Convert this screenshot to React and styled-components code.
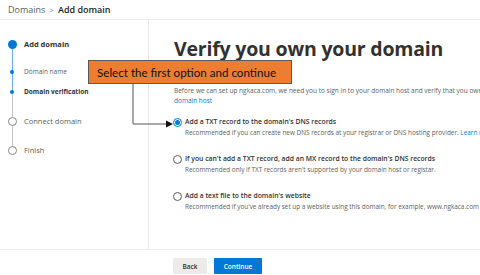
import React from "react";
import styled, { createGlobalStyle } from "styled-components";

const GlobalStyle = createGlobalStyle`
	html, body {
		margin: 0;
		padding: 0;
		background: #ffffff;
	}
	body {
		font-family: "Open Sans", "Noto Sans", sans-serif;
		color: #323130;
		overflow: hidden;
	}
`;

const Page = styled.div`
	position: relative;
	width: 480px;
	height: 275px;
	display: flex;
	flex-direction: column;
`;

const Header = styled.div`
	height: 20px;
	display: flex;
	align-items: center;
	gap: 3px;
	padding-left: 8px;
	border-bottom: 1px solid #edebe9;
	font-size: 9px;
	box-sizing: border-box;
`;

const Crumb = styled.span`
	color: ${(p) => (p.current ? "#201f1e" : "#605e5c")};
	font-weight: ${(p) => (p.current ? 600 : 400)};
`;

const Chevron = styled.span`
	color: #8a8886;
	font-size: 8px;
	margin: 0 1px;
`;

const Body = styled.div`
	flex: 1;
	display: flex;
	border-bottom: 1px solid #edebe9;
`;

const Nav = styled.div`
	width: 149px;
	border-right: 1px solid #edebe9;
	padding-top: 18px;
	box-sizing: border-box;
`;

const Step = styled.div`
	position: relative;
	display: flex;
	align-items: flex-start;
	height: ${(p) => p.span}px;

	&::after {
		content: "";
		display: ${(p) => (p.last ? "none" : "block")};
		position: absolute;
		left: 11.5px;
		top: 6px;
		width: 1.2px;
		height: ${(p) => p.span}px;
		background: ${(p) => p.line};
	}
`;

const Marker = styled.div`
	width: 24px;
	height: 12px;
	display: flex;
	align-items: center;
	justify-content: center;
	position: relative;
	z-index: 1;
`;

const Dot = styled.div`
	width: ${(p) => p.size}px;
	height: ${(p) => p.size}px;
	border-radius: 50%;
	box-sizing: border-box;
	background: ${(p) => (p.hollow ? "#ffffff" : "#0078d4")};
	border: ${(p) => (p.hollow ? "1px solid #8a8886" : "none")};
`;

const StepLabel = styled.div`
	line-height: 12px;
	font-size: ${(p) => p.size}px;
	font-weight: ${(p) => (p.bold ? 700 : 400)};
	color: ${(p) => (p.bold ? "#323130" : "#605e5c")};
	white-space: nowrap;
`;

const Main = styled.div`
	flex: 1;
	padding-left: 25px;
	padding-top: 15px;
	overflow: hidden;
	white-space: nowrap;
`;

const Title = styled.h1`
	margin: 0;
	font-size: 19.5px;
	font-weight: 700;
	line-height: 28px;
	color: #323130;
	letter-spacing: -0.2px;
`;

const Intro = styled.p`
	margin: 23px 0 0;
	font-size: 6.5px;
	line-height: 10px;
	color: #605e5c;
`;

const Link = styled.span`
	color: #0078d4;
`;

const Options = styled.div`
	display: flex;
	flex-direction: column;
	gap: 16px;
	margin-top: 11px;
`;

const Option = styled.div`
	display: grid;
	grid-template-columns: 12px 1fr;
	row-gap: 1px;
	margin-left: -1px;
`;

const Radio = styled.div`
	width: 9px;
	height: 9px;
	border-radius: 50%;
	border: 1px solid ${(p) => (p.checked ? "#0078d4" : "#605e5c")};
	box-sizing: border-box;
	display: flex;
	align-items: center;
	justify-content: center;
	align-self: center;

	&::after {
		content: "";
		display: ${(p) => (p.checked ? "block" : "none")};
		width: 5px;
		height: 5px;
		border-radius: 50%;
		background: #0078d4;
	}
`;

const OptionLabel = styled.div`
	font-size: 6.8px;
	font-weight: 600;
	line-height: 10px;
	color: #323130;
`;

const OptionHint = styled.div`
	grid-column: 2;
	font-size: 6.4px;
	line-height: 10px;
	color: #605e5c;
`;

const Footer = styled.div`
	height: 25px;
	display: flex;
	align-items: flex-start;
	gap: 7px;
	padding: 8px 0 0 173px;
	box-sizing: border-box;
`;

const Button = styled.button`
	height: 16px;
	width: ${(p) => p.w}px;
	border: none;
	border-radius: 1px;
	padding: 0;
	font-family: "Open Sans", sans-serif;
	font-size: 6.5px;
	font-weight: 600;
	background: ${(p) => (p.primary ? "#0078d4" : "#edebe9")};
	color: ${(p) => (p.primary ? "#ffffff" : "#323130")};
`;

const Callout = styled.div`
	position: absolute;
	left: 88px;
	top: 60px;
	width: 204px;
	height: 24px;
	box-sizing: border-box;
	background: #ed7d31;
	border: 1px solid #5a5a5a;
	display: flex;
	align-items: center;
	padding-left: 8px;
	font-family: Lato, "Open Sans", sans-serif;
	font-size: 11.6px;
	color: #111111;
	white-space: nowrap;
`;

const Connector = styled.svg`
	position: absolute;
	left: 0;
	top: 0;
	pointer-events: none;
`;

const steps = [
	{ label: "Add domain", span: 28, size: 7.5, bold: true, dot: 9, line: "#6cb0e8" },
	{ label: "Domain name", span: 20, size: 6.5, dot: 4, line: "#6cb0e8" },
	{ label: "Domain verification", span: 29, size: 6.5, bold: true, dot: 4, line: "#c8c6c4" },
	{ label: "Connect domain", span: 29, size: 7.5, dot: 9, hollow: true, line: "#c8c6c4" },
	{ label: "Finish", span: 12, size: 7.5, dot: 9, hollow: true, last: true },
];

const options = [
	{
		label: "Add a TXT record to the domain's DNS records",
		hint: "Recommended if you can create new DNS records at your registrar or DNS hosting provider.",
		link: " Learn more",
		checked: true,
	},
	{
		label: "If you can't add a TXT record, add an MX record to the domain's DNS records",
		hint: "Recommended only if TXT records aren't supported by your domain host or registar.",
	},
	{
		label: "Add a text file to the domain's website",
		hint: "Recommended if you've already set up a website using this domain, for example, www.ngkaca.com",
	},
];

export default function App() {
	return (
		<>
			<GlobalStyle />
			<Page>
				<Header>
					<Crumb>Domains</Crumb>
					<Chevron>&gt;</Chevron>
					<Crumb current>Add domain</Crumb>
				</Header>
				<Body>
					<Nav>
						{steps.map((s) => (
							<Step key={s.label} span={s.span} line={s.line} last={s.last}>
								<Marker>
									<Dot size={s.dot} hollow={s.hollow} />
								</Marker>
								<StepLabel size={s.size} bold={s.bold}>
									{s.label}
								</StepLabel>
							</Step>
						))}
					</Nav>
					<Main>
						<Title>Verify you own your domain</Title>
						<Intro>
							Before we can set up ngkaca.com, we need you to sign in to your domain host and verify that you own
							<br />
							<Link>domain host</Link>
						</Intro>
						<Options>
							{options.map((o) => (
								<Option key={o.label}>
									<Radio checked={o.checked} />
									<OptionLabel>{o.label}</OptionLabel>
									<OptionHint>
										{o.hint}
										{o.link && <Link>{o.link}</Link>}
									</OptionHint>
								</Option>
							))}
						</Options>
					</Main>
				</Body>
				<Footer>
					<Button w={34}>Back</Button>
					<Button primary w={48}>
						Continue
					</Button>
				</Footer>
				<Callout>Select the first option and continue</Callout>
				<Connector width="480" height="275">
					<polyline points="133,84 133,124 168,124" fill="none" stroke="#555555" strokeWidth="1" />
					<polygon points="173,124 166,120.5 166,127.5" fill="#111111" />
				</Connector>
			</Page>
		</>
	);
}
